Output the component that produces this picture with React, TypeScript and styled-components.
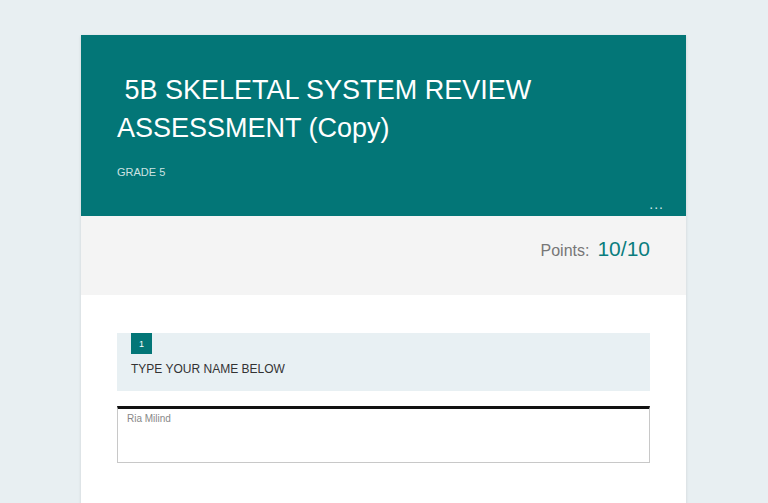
import styled, { createGlobalStyle } from "styled-components";

const GlobalStyle = createGlobalStyle`
  html, body {
    margin: 0;
    padding: 0;
    background: #e8eff2;
    font-family: "Liberation Sans", Arial, sans-serif;
  }
`;

const Page = styled.div`
  min-height: 503px;
  padding-top: 35px;
  box-sizing: border-box;
  overflow: hidden;
`;

const Card = styled.div`
  width: 605px;
  margin-left: 81px;
  background: #ffffff;
  box-shadow: 0 1px 3px rgba(0, 0, 0, 0.12);
  min-height: 480px;
`;

const Header = styled.header`
  position: relative;
  height: 181px;
  background: #037677;
  color: #ffffff;
  padding: 36px 36px 0 36px;
  box-sizing: border-box;
`;

const Title = styled.h1`
  margin: 0;
  font-weight: 400;
  font-size: 27px;
  line-height: 38px;
  white-space: pre-wrap;
  width: 440px;
`;

const Grade = styled.div`
  margin-top: 19px;
  font-size: 11px;
  color: #cde2e2;
`;

const More = styled.span`
  position: absolute;
  right: 22px;
  bottom: 4px;
  font-size: 14px;
  letter-spacing: 1px;
  color: #d6e8e8;
`;

const PointsBar = styled.div`
  height: 79px;
  background: #f4f4f4;
  display: flex;
  justify-content: flex-end;
  align-items: flex-start;
  padding: 21px 36px 0 0;
  box-sizing: border-box;
`;

const PointsLabel = styled.span`
  font-size: 16px;
  color: #777777;
  margin-top: 5px;
  margin-right: 8px;
`;

const PointsValue = styled.span`
  font-size: 21px;
  color: #0a7d7e;
`;

const Body = styled.div`
  padding: 38px 36px 0 36px;
`;

const Question = styled.div`
  background: #e8f0f3;
  height: 58px;
  padding: 0 14px;
  box-sizing: border-box;
`;

const Badge = styled.div`
  width: 21px;
  height: 21px;
  background: #037677;
  color: #ffffff;
  font-size: 9px;
  display: flex;
  align-items: center;
  justify-content: center;
`;

const QuestionText = styled.div`
  margin-top: 8px;
  font-size: 12px;
  color: #333333;
`;

const Answer = styled.div`
  margin-top: 15px;
  height: 57px;
  border: 1px solid #c8c8c8;
  border-top: 3px solid #111111;
  padding: 4px 9px;
  box-sizing: border-box;
  font-size: 10px;
  color: #888888;
`;

export default function App() {
  return (
    <>
      <GlobalStyle />
      <Page>
        <Card>
          <Header>
            <Title>{" 5B SKELETAL SYSTEM REVIEW ASSESSMENT (Copy)"}</Title>
            <Grade>GRADE 5</Grade>
            <More>...</More>
          </Header>
          <PointsBar>
            <PointsLabel>Points:</PointsLabel>
            <PointsValue>10/10</PointsValue>
          </PointsBar>
          <Body>
            <Question>
              <Badge>1</Badge>
              <QuestionText>TYPE YOUR NAME BELOW</QuestionText>
            </Question>
            <Answer>Ria Milind</Answer>
          </Body>
        </Card>
      </Page>
    </>
  );
}
